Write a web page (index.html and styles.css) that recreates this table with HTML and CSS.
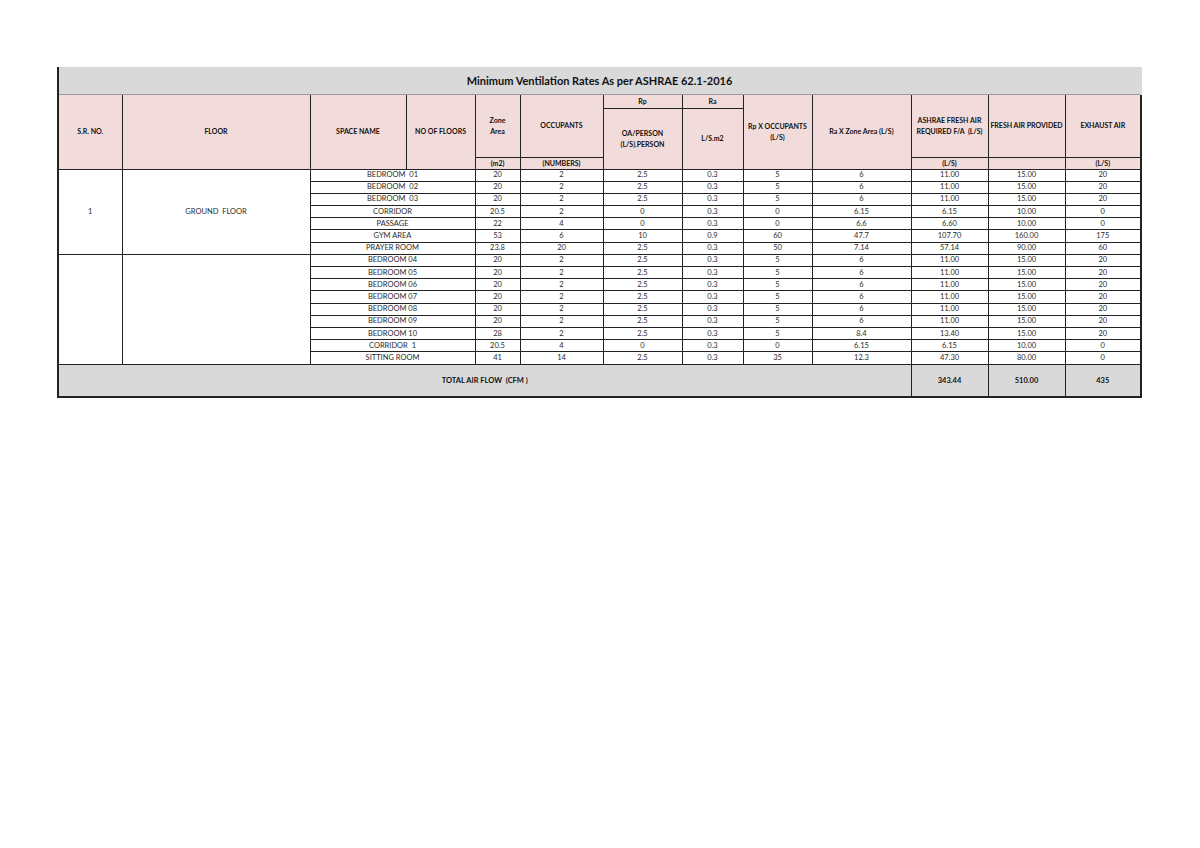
FILE: index.html
```html
<!DOCTYPE html>
<html>
<head>
<meta charset="utf-8">
<link rel="stylesheet" href="styles.css">
</head>
<body>
<table class="sheet">
  <colgroup>
    <col class="w64"><col class="w188"><col class="w96"><col class="w69"><col class="w45"><col class="w83"><col class="w79"><col class="w61"><col class="w69"><col class="w99"><col class="w77"><col class="w77"><col class="w76">
  </colgroup>
  <tr class="title-row"><td colspan="13" class="title">Minimum Ventilation Rates As per ASHRAE 62.1-2016</td></tr>
  <tr class="hr-a">
    <th rowspan="3">S.R. NO.</th>
    <th rowspan="3">FLOOR</th>
    <th rowspan="3">SPACE NAME</th>
    <th rowspan="3">NO OF FLOORS</th>
    <th rowspan="2">Zone<br>Area</th>
    <th rowspan="2">OCCUPANTS</th>
    <th>Rp</th>
    <th>Ra</th>
    <th rowspan="3">Rp X OCCUPANTS<br>(L/S)</th>
    <th rowspan="3">Ra X Zone Area (L/S)</th>
    <th rowspan="2">ASHRAE FRESH AIR<br>REQUIRED F/A&nbsp; (L/S)</th>
    <th rowspan="2">FRESH AIR PROVIDED</th>
    <th rowspan="2">EXHAUST AIR</th>
  </tr>
  <tr class="hr-b">
    <th rowspan="2">OA/PERSON<br>(L/S).PERSON</th>
    <th rowspan="2">L/S.m2</th>
  </tr>
  <tr class="hr-c">
    <th>(m2)</th>
    <th>(NUMBERS)</th>
    <th>(L/S)</th>
    <th></th>
    <th>(L/S)</th>
  </tr>
  <tr class="d"><td rowspan="7">1</td><td rowspan="7">GROUND&nbsp; FLOOR</td><td colspan="2" class="sp">BEDROOM&nbsp; 01</td><td>20</td><td>2</td><td>2.5</td><td>0.3</td><td>5</td><td>6</td><td>11.00</td><td>15.00</td><td>20</td></tr>
  <tr class="d"><td colspan="2" class="sp">BEDROOM&nbsp; 02</td><td>20</td><td>2</td><td>2.5</td><td>0.3</td><td>5</td><td>6</td><td>11.00</td><td>15.00</td><td>20</td></tr>
  <tr class="d"><td colspan="2" class="sp">BEDROOM&nbsp; 03</td><td>20</td><td>2</td><td>2.5</td><td>0.3</td><td>5</td><td>6</td><td>11.00</td><td>15.00</td><td>20</td></tr>
  <tr class="d"><td colspan="2" class="sp">CORRIDOR</td><td>20.5</td><td>2</td><td>0</td><td>0.3</td><td>0</td><td>6.15</td><td>6.15</td><td>10.00</td><td>0</td></tr>
  <tr class="d"><td colspan="2" class="sp">PASSAGE</td><td>22</td><td>4</td><td>0</td><td>0.3</td><td>0</td><td>6.6</td><td>6.60</td><td>10.00</td><td>0</td></tr>
  <tr class="d"><td colspan="2" class="sp">GYM AREA</td><td>53</td><td>6</td><td>10</td><td>0.9</td><td>60</td><td>47.7</td><td>107.70</td><td>160.00</td><td>175</td></tr>
  <tr class="d"><td colspan="2" class="sp">PRAYER ROOM</td><td>23.8</td><td>20</td><td>2.5</td><td>0.3</td><td>50</td><td>7.14</td><td>57.14</td><td>90.00</td><td>60</td></tr>
  <tr class="d"><td rowspan="9"></td><td rowspan="9"></td><td colspan="2" class="sp">BEDROOM 04</td><td>20</td><td>2</td><td>2.5</td><td>0.3</td><td>5</td><td>6</td><td>11.00</td><td>15.00</td><td>20</td></tr>
  <tr class="d"><td colspan="2" class="sp">BEDROOM 05</td><td>20</td><td>2</td><td>2.5</td><td>0.3</td><td>5</td><td>6</td><td>11.00</td><td>15.00</td><td>20</td></tr>
  <tr class="d"><td colspan="2" class="sp">BEDROOM 06</td><td>20</td><td>2</td><td>2.5</td><td>0.3</td><td>5</td><td>6</td><td>11.00</td><td>15.00</td><td>20</td></tr>
  <tr class="d"><td colspan="2" class="sp">BEDROOM 07</td><td>20</td><td>2</td><td>2.5</td><td>0.3</td><td>5</td><td>6</td><td>11.00</td><td>15.00</td><td>20</td></tr>
  <tr class="d"><td colspan="2" class="sp">BEDROOM 08</td><td>20</td><td>2</td><td>2.5</td><td>0.3</td><td>5</td><td>6</td><td>11.00</td><td>15.00</td><td>20</td></tr>
  <tr class="d"><td colspan="2" class="sp">BEDROOM 09</td><td>20</td><td>2</td><td>2.5</td><td>0.3</td><td>5</td><td>6</td><td>11.00</td><td>15.00</td><td>20</td></tr>
  <tr class="d"><td colspan="2" class="sp">BEDROOM 10</td><td>28</td><td>2</td><td>2.5</td><td>0.3</td><td>5</td><td>8.4</td><td>13.40</td><td>15.00</td><td>20</td></tr>
  <tr class="d"><td colspan="2" class="sp">CORRIDOR&nbsp; 1</td><td>20.5</td><td>4</td><td>0</td><td>0.3</td><td>0</td><td>6.15</td><td>6.15</td><td>10.00</td><td>0</td></tr>
  <tr class="d"><td colspan="2" class="sp">SITTING ROOM</td><td>41</td><td>14</td><td>2.5</td><td>0.3</td><td>35</td><td>12.3</td><td>47.30</td><td>80.00</td><td>0</td></tr>
  <tr class="total"><td colspan="10">TOTAL AIR FLOW&nbsp; (CFM )</td><td>343.44</td><td>510.00</td><td>435</td></tr>
</table>
</body>
</html>
```
FILE: styles.css
```css
html, body {
  margin: 0;
  padding: 0;
  background: #ffffff;
}
body {
  font-family: Lato, "Open Sans", "Liberation Sans", sans-serif;
  color: #1a1a1a;
}
.sheet {
  margin: 67px 0 0 57px;
  width: 1084px;
  table-layout: fixed;
  border-collapse: collapse;
  border-left: 2px solid #222;
  border-right: 2px solid #222;
  border-bottom: 2px solid #222;
}
.w64 { width: 64px; }
.w188 { width: 188px; }
.w96 { width: 96px; }
.w69 { width: 69px; }
.w45 { width: 45px; }
.w83 { width: 83px; }
.w79 { width: 79px; }
.w61 { width: 61px; }
.w99 { width: 99px; }
.w77 { width: 77px; }
.w76 { width: 76px; }

.sheet td, .sheet th {
  padding: 0;
  text-align: center;
  vertical-align: middle;
  overflow: hidden;
  white-space: nowrap;
}
.title-row { height: 27px; }
.title {
  background: #d9d9d9;
  font-weight: 700;
  font-size: 11px;
  color: #111;
  border-bottom: 1px solid #999;
  border-right: 2px solid #d9d9d9;
}
.sheet th {
  background: #f2dcdb;
  font-weight: 700;
  font-size: 7px;
  line-height: 11px;
  color: #111;
  border: 1px solid #222;
}
.hr-a { height: 14px; }
.hr-b { height: 49px; }
.hr-c { height: 12px; }
.d { height: 12.2px; }
.d td {
  font-size: 7.5px;
  line-height: 10px;
  border: 1px solid #222;
  color: #2a2a2a;
}
.total { height: 33px; }
.total td {
  background: #d9d9d9;
  font-weight: 700;
  font-size: 7.5px;
  border: 1px solid #222;
  color: #111;
}
```
